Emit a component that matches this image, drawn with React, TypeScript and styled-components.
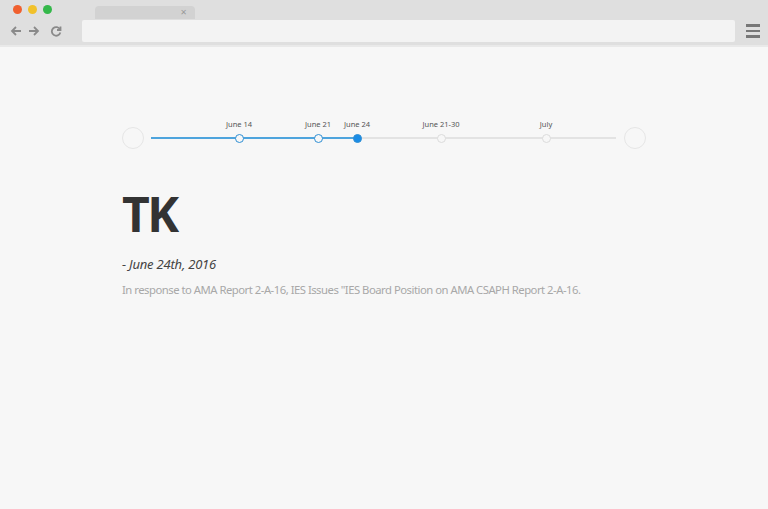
import React from "react";
import styled, { createGlobalStyle } from "styled-components";

const Global = createGlobalStyle`
  html, body { margin: 0; padding: 0; background: #f7f7f7; }
  body { font-family: "Noto Sans", "Open Sans", sans-serif; width: 768px; height: 509px; overflow: hidden; }
`;

const Window = styled.div`
  width: 768px;
  height: 509px;
  display: flex;
  flex-direction: column;
  background: #f7f7f7;
`;

const Chrome = styled.div`
  background: #dfdfdf;
  height: 45px;
  border-bottom: 2px solid #e9e9e9;
  display: flex;
  flex-direction: column;
`;

const TitleRow = styled.div`
  height: 19px;
  display: flex;
  align-items: flex-end;
  position: relative;
`;

const Lights = styled.div`
  position: absolute;
  left: 13px;
  top: 5px;
  display: flex;
  gap: 6px;
`;

const Light = styled.span<{ $c: string }>`
  width: 9px;
  height: 9px;
  border-radius: 50%;
  background: ${(p) => p.$c};
`;

const Tab = styled.div`
  margin-left: 95px;
  width: 100px;
  height: 13px;
  background: #d2d2d2;
  border-radius: 4px 4px 0 0;
  display: flex;
  justify-content: flex-end;
  align-items: center;
  padding-right: 8px;
  box-sizing: border-box;
  color: #9a9a9a;
  font-size: 8px;
  font-family: "DejaVu Sans", sans-serif;
  line-height: 1;
`;

const ToolRow = styled.div`
  flex: 1;
  display: flex;
  align-items: center;
  padding: 0 8px 2px 10px;
`;

const NavIcons = styled.div`
  display: flex;
  gap: 6px;
  width: 72px;
  color: #8a8a8a;
`;

const Address = styled.div`
  width: 653px;
  height: 22px;
  background: #f3f3f3;
  border-radius: 2px;
`;

const Menu = styled.div`
  margin-left: 11px;
  display: flex;
  flex-direction: column;
  gap: 3px;
  & > span {
    display: block;
    width: 14px;
    height: 2.5px;
    background: #777;
  }
`;

const Content = styled.main`
  flex: 1;
  padding: 0 122px;
  display: flex;
  flex-direction: column;
`;

const Timeline = styled.div`
  margin-top: 79px;
  width: 524px;
  height: 24px;
  display: flex;
  align-items: center;
  position: relative;
`;

const EndCircle = styled.div`
  width: 20px;
  height: 20px;
  border: 1.5px solid #e6e6e6;
  border-radius: 50%;
  flex: none;
  background: #f7f7f7;
`;

const Track = styled.div`
  flex: 1;
  height: 24px;
  margin: 0 8px 0 7px;
  position: relative;
`;

const Line = styled.div<{ $active?: boolean }>`
  position: absolute;
  top: 11px;
  left: 0;
  height: ${(p) => (p.$active ? "2px" : "1.5px")};
  background: ${(p) => (p.$active ? "#4ea4dd" : "#e3e3e3")};
`;

const Point = styled.div<{ $state: "past" | "current" | "future" }>`
  position: absolute;
  top: 12px;
  width: 7px;
  height: 7px;
  margin: -4.5px 0 0 -4.5px;
  border-radius: 50%;
  border: 1px solid
    ${(p) => (p.$state === "future" ? "#dcdcdc" : "#2f8fd4")};
  background: ${(p) =>
    p.$state === "current" ? "#1a8ce6" : "#f7f7f7"};
  border-width: ${(p) => (p.$state === "future" ? "1px" : "1.5px")};
`;

const Label = styled.div`
  position: absolute;
  top: -7px;
  transform: translateX(-50%);
  font-size: 7.5px;
  color: #555;
  white-space: nowrap;
  font-family: "Noto Sans", sans-serif;
`;

const Title = styled.h1`
  margin: 37px 0 0 0;
  font-family: "Open Sans", "Noto Sans", sans-serif;
  font-weight: 700;
  font-size: 48px;
  line-height: 54px;
  letter-spacing: -2.5px;
  color: #333;
`;

const DateLine = styled.div`
  margin-top: 14px;
  font-style: italic;
  font-size: 13px;
  color: #444;
  letter-spacing: -0.2px;
`;

const Body = styled.p`
  margin: 9px 0 0;
  font-size: 11.3px;
  color: #a8a8a8;
  letter-spacing: -0.5px;
`;

const points: { x: number; label: string; state: "past" | "current" | "future" }[] = [
  { x: 88, label: "June 14", state: "past" },
  { x: 167, label: "June 21", state: "past" },
  { x: 206, label: "June 24", state: "current" },
  { x: 290, label: "June 21-30", state: "future" },
  { x: 395, label: "July", state: "future" },
];

export default function App() {
  return (
    <>
      <Global />
      <Window>
        <Chrome>
          <TitleRow>
            <Lights>
              <Light $c="#f0602f" />
              <Light $c="#f1c12a" />
              <Light $c="#34b84a" />
            </Lights>
            <Tab>✕</Tab>
          </TitleRow>
          <ToolRow>
            <NavIcons>
              <svg width="12" height="12" viewBox="0 0 12 12" fill="none" stroke="#8a8a8a" strokeWidth="1.8">
                <path d="M11 6H2M6 2L2 6l4 4" />
              </svg>
              <svg width="12" height="12" viewBox="0 0 12 12" fill="none" stroke="#8a8a8a" strokeWidth="1.8">
                <path d="M1 6h9M6 2l4 4-4 4" />
              </svg>
              <svg width="12" height="12" viewBox="0 0 12 12" fill="none" stroke="#8a8a8a" strokeWidth="1.8" style={{ marginLeft: 4 }}>
                <path d="M10 4.5A4.3 4.3 0 1 0 10.3 7.5" />
                <path d="M10.5 1.5v3.5H7" />
              </svg>
            </NavIcons>
            <Address />
            <Menu>
              <span />
              <span />
              <span />
            </Menu>
          </ToolRow>
        </Chrome>
        <Content>
          <Timeline>
            <EndCircle />
            <Track>
              <Line style={{ width: "100%" }} />
              <Line $active style={{ width: 206 }} />
              {points.map((p) => (
                <React.Fragment key={p.label}>
                  <Label style={{ left: p.x }}>{p.label}</Label>
                  <Point $state={p.state} style={{ left: p.x }} />
                </React.Fragment>
              ))}
            </Track>
            <EndCircle />
          </Timeline>
          <Title>TK</Title>
          <DateLine>- June 24th, 2016</DateLine>
          <Body>
            In response to AMA Report 2-A-16, IES Issues "IES Board Position on AMA CSAPH Report 2-A-16.
          </Body>
        </Content>
      </Window>
    </>
  );
}
